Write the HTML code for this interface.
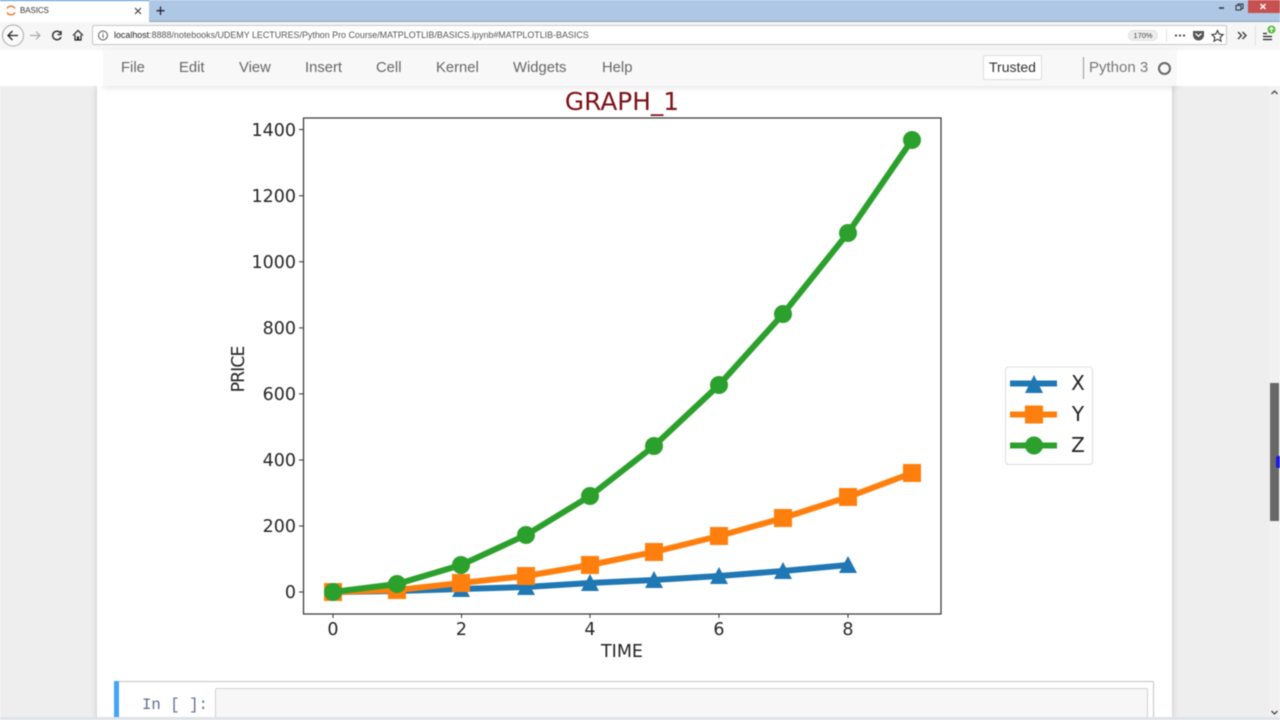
<!DOCTYPE html>
<html><head><meta charset="utf-8"><style>
html,body{margin:0;padding:0;width:1280px;height:720px;overflow:hidden;background:#fff;font-family:"Liberation Sans",sans-serif}
.a{position:absolute}
</style></head><body>
<div class="a" style="left:0;top:0;width:1280px;height:720px;overflow:hidden;filter:blur(.5px)">
<!-- title bar -->
<div class="a" style="left:0;top:0;width:1280px;height:22px;background:#adc7e5"></div>
<div class="a" style="left:149px;top:21px;width:1131px;height:1px;background:#8fa5c0"></div>
<div class="a" style="left:0;top:0;width:149px;height:22px;background:#fff;border-top:1px solid #3f8fdc;box-sizing:border-box"></div>
<div class="a" style="left:1248px;top:0;width:32px;height:13px;background:#c75050"></div>
<svg class="a" style="left:0;top:0" width="1280" height="22" viewBox="0 0 1280 22">
<path d="M7 8.500A4.600 4.600 0 0 1 15 8.500" fill="none" stroke="#e8772e" stroke-width="1.400"/>
<path d="M7 12.500A4.600 4.600 0 0 0 15 12.500" fill="none" stroke="#e8772e" stroke-width="1.400"/>
<path d="M135 8l6 6M141 8l-6 6" stroke="#444" stroke-width="1.200" fill="none"/>
<path d="M160.500 6.500v8.500M156.500 10.700h8" stroke="#223" stroke-width="1.300" fill="none"/>
<path d="M1219 8h5" stroke="#333" stroke-width="1.500"/>
<path d="M1236 5.500h5v4.500h-5zM1238 5.500v-1.500h5v4.500h-2" stroke="#333" stroke-width="1" fill="none"/>
<path d="M1260.500 4l5 5M1265.500 4l-5 5" stroke="#fff" stroke-width="1.500"/>
</svg>
<!-- toolbar -->
<div class="a" style="left:0;top:22px;width:1280px;height:28px;background:#f6f6f6"></div>
<div class="a" style="left:92px;top:25px;width:1135px;height:20px;background:#fff;border:1px solid #c8c8c8;border-radius:2px;box-sizing:border-box"></div>
<svg class="a" style="left:0;top:22px" width="1280" height="28" viewBox="0 22 1280 28">
<circle cx="13" cy="35.500" r="10.500" fill="#fafafa" stroke="#a8a8a8" stroke-width="1"/>
<path d="M18 35.500H8.500M12.500 31l-4.500 4.500 4.500 4.500" stroke="#222" stroke-width="1.300" fill="none"/>
<path d="M30 35.500h10M36 31.500l4 4-4 4" stroke="#aaa" stroke-width="1.200" fill="none"/>
<path d="M60.500 33A4.300 4.300 0 1 0 61 37M61 31v3.500h-3.500" stroke="#222" stroke-width="1.300" fill="none"/>
<path d="M73 35.500l5-5 5 5M75 35v5h2.500v-3h1v3h2.500v-5" stroke="#222" stroke-width="1.200" fill="none"/>
<circle cx="103" cy="35.500" r="4.500" fill="none" stroke="#555" stroke-width="1"/>
<path d="M103 34.500v3.300M103 32.800v.8" stroke="#555" stroke-width="1"/>
<path d="M1166.500 29v13" stroke="#e2e2e2"/>
<circle cx="1176" cy="35.500" r="1.100" fill="#444"/><circle cx="1180" cy="35.500" r="1.100" fill="#444"/><circle cx="1184" cy="35.500" r="1.100" fill="#444"/>
<path d="M1193 31h11v4a5.500 5.500 0 0 1-11 0z" fill="#555"/><path d="M1195.500 33.500l3 2.700 3-2.700" stroke="#fff" stroke-width="1.300" fill="none"/>
<path d="M1217.500 30.500l1.700 3.600 3.900.5-2.900 2.700.8 3.900-3.500-2-3.500 2 .8-3.900-2.900-2.700 3.900-.5z" fill="none" stroke="#333" stroke-width="1.100"/>
<path d="M1238 32l3.500 3.500-3.500 3.500M1242.500 32l3.500 3.500-3.500 3.500" stroke="#333" stroke-width="1.300" fill="none"/>
<path d="M1255.500 25v21" stroke="#e0e0e0"/>
<path d="M1263 33.500h4M1263 36.500h9M1263 39.500h9" stroke="#222" stroke-width="1.300"/>
<circle cx="1271.500" cy="29.500" r="4" fill="#5cb83c"/><path d="M1271.500 32v-4.500M1269.500 29.500l2-2 2 2" stroke="#fff" stroke-width="1.100" fill="none"/>
</svg>
<div class="a" style="left:20px;top:5px;font-size:8px;letter-spacing:-.1px;color:#333;line-height:12px">BASICS</div>
<div class="a" style="left:114px;top:29px;font-size:8.920px;color:#555;line-height:13px;white-space:nowrap"><span style="color:#222">localhost</span>:8888/notebooks/UDEMY LECTURES/Python Pro Course/MATPLOTLIB/BASICS.ipynb#MATPLOTLIB-BASICS</div>
<div class="a" style="left:1128px;top:30px;width:30px;height:11px;background:#eee;border:1px solid #e2e2e2;border-radius:6px;box-sizing:border-box;font-size:7.500px;line-height:10px;text-align:center;color:#444">170%</div>

<!-- page background -->
<div class="a" style="left:0;top:86px;width:1280px;height:634px;background:#eeeeee"></div>
<div class="a" style="left:0;top:50px;width:1280px;height:36px;background:#fff"></div>
<div class="a" style="left:97px;top:86px;width:1075px;height:634px;background:#fff;box-shadow:0 0 6px rgba(0,0,0,.18)"></div>
<div class="a" style="left:103px;top:50px;width:1074px;height:36px;background:#f8f8f8;box-shadow:0 2px 6px rgba(0,0,0,.1)"></div>
<div class="a" style="left:0;top:50px;width:103px;height:36px;background:#fff"></div>
<div class="a" style="left:1177px;top:50px;width:103px;height:36px;background:#fff"></div>
<div style="position:absolute;top:58.500px;font-size:14.800px;line-height:18px;color:#666;white-space:nowrap;left:0">
<span class="a" style="left:121px">File</span><span class="a" style="left:179px">Edit</span><span class="a" style="left:239px">View</span><span class="a" style="left:305px">Insert</span><span class="a" style="left:376px">Cell</span><span class="a" style="left:436px">Kernel</span><span class="a" style="left:513px">Widgets</span><span class="a" style="left:602px">Help</span></div>
<div class="a" style="left:983px;top:55px;width:59px;height:25px;background:#fff;border:1px solid #ddd;border-radius:2px;box-sizing:border-box;font-size:14px;line-height:23px;text-align:center;color:#333">Trusted</div>
<div class="a" style="left:1083px;top:57px;width:1px;height:22px;background:#999"></div>
<div class="a" style="left:1089px;top:59px;font-size:15px;line-height:18px;color:#777">Python 3</div>
<div class="a" style="left:1158px;top:62px;width:13px;height:13px;border:2px solid #666;border-radius:50%;box-sizing:border-box"></div>

<!-- scrollbar -->
<div class="a" style="left:1269px;top:86px;width:11px;height:634px;background:#f1f1f1"></div>
<div class="a" style="left:1269.500px;top:383px;width:9.500px;height:138px;background:#686868"></div>
<svg class="a" style="left:1269px;top:86px" width="11" height="634" viewBox="0 86 11 634">
<path d="M2.500 94l3-3 3 3" fill="none" stroke="#444" stroke-width="1.300"/>
<path d="M2.500 711l3 3 3-3" fill="none" stroke="#444" stroke-width="1.300"/>
<rect x="7" y="456" width="6" height="12" rx="2" fill="#1a1ae0"/>
</svg>

<!-- plot -->
<svg class="a" style="left:0;top:0" width="1280" height="720" viewBox="0 0 1280 720" font-family="'DejaVu Sans',sans-serif">
<text x="622" y="110" font-size="24.800" fill="#7f0f14" text-anchor="middle">GRAPH_1</text>
<rect x="303.500" y="118" width="637.500" height="496" fill="#fff" stroke="#333" stroke-width="1.200"/>
<g stroke="#333" stroke-width="1">
<path d="M299 129.500h4M299 195.700h4M299 261.800h4M299 327.900h4M299 393.900h4M299 460h4M299 526h4M299 592h4"/>
<path d="M333 614v4M461.500 614v4M590 614v4M719 614v4M848 614v4"/>
</g>
<g font-size="17.500" fill="#262626" text-anchor="end">
<text x="296" y="136">1400</text><text x="296" y="202">1200</text><text x="296" y="268">1000</text><text x="296" y="334">800</text><text x="296" y="400">600</text><text x="296" y="466">400</text><text x="296" y="532">200</text><text x="296" y="598">0</text>
</g>
<g font-size="17.500" fill="#262626" text-anchor="middle">
<text x="333" y="635">0</text><text x="461.500" y="635">2</text><text x="590" y="635">4</text><text x="719" y="635">6</text><text x="848" y="635">8</text>
<text x="622" y="657">TIME</text>
<text transform="translate(244 369) rotate(-90)" textLength="47">PRICE</text>
</g>
<g id="x" fill="#1f77b4">
<polyline points="333,592 397,591 461,589 526,587 590,583 654,580 719,576 783,571 848,565" fill="none" stroke="#1f77b4" stroke-width="6"/>
<path d="M333 583l9 17h-18zM397 582l9 17h-18zM461 580l9 17h-18zM526 578l9 17h-18zM590 574l9 17h-18zM654 571l9 17h-18zM719 567l9 17h-18zM783 562l9 17h-18zM848 556l9 17h-18z"/>
</g>
<g id="y" fill="#ff7f0e">
<polyline points="333,592 397,590 461,583 526,576 590,565 654,552 719,536 783,518 848,497 912,473" fill="none" stroke="#ff7f0e" stroke-width="6"/>
<rect x="324" y="583" width="18" height="18"/><rect x="388" y="581" width="18" height="18"/><rect x="452" y="574" width="18" height="18"/><rect x="517" y="567" width="18" height="18"/><rect x="581" y="556" width="18" height="18"/><rect x="645" y="543" width="18" height="18"/><rect x="710" y="527" width="18" height="18"/><rect x="774" y="509" width="18" height="18"/><rect x="839" y="488" width="18" height="18"/><rect x="903" y="464" width="18" height="18"/>
</g>
<g id="z" fill="#2ca02c">
<polyline points="333,592 397,584 461,565 526,535 590,496 654,446 719,385 783,314 848,233 912,140" fill="none" stroke="#2ca02c" stroke-width="6"/>
<circle cx="333" cy="592" r="9"/><circle cx="397" cy="584" r="9"/><circle cx="461" cy="565" r="9"/><circle cx="526" cy="535" r="9"/><circle cx="590" cy="496" r="9"/><circle cx="654" cy="446" r="9"/><circle cx="719" cy="385" r="9"/><circle cx="783" cy="314" r="9"/><circle cx="848" cy="233" r="9"/><circle cx="912" cy="140" r="9"/>
</g>
<!-- legend -->
<rect x="1005.500" y="367" width="87" height="97.500" rx="3" fill="#fff" stroke="#ddd" stroke-width="1"/>
<path d="M1010 383.500h47" stroke="#1f77b4" stroke-width="6"/><path d="M1034 375l9 18h-18z" fill="#1f77b4"/>
<path d="M1010 414.500h47" stroke="#ff7f0e" stroke-width="6"/><rect x="1025" y="405.500" width="18" height="18" fill="#ff7f0e"/>
<path d="M1010 445.500h47" stroke="#2ca02c" stroke-width="6"/><circle cx="1034" cy="445.500" r="9" fill="#2ca02c"/>
<g font-size="20" fill="#222" text-anchor="middle"><text x="1078" y="390">X</text><text x="1078" y="421">Y</text><text x="1078" y="452">Z</text></g>
</svg>

<!-- next cell -->
<div class="a" style="left:114px;top:681px;width:1040px;height:39px;border:1px solid #c4c4c4;border-radius:2px;box-sizing:border-box"></div>
<div class="a" style="left:114px;top:681px;width:5px;height:39px;background:#42a5f5"></div>
<div class="a" style="left:215px;top:688px;width:933px;height:32px;background:#f7f7f7;border:1px solid #d0d0d0;border-radius:2px;box-sizing:border-box"></div>
<div class="a" style="left:142px;top:696px;font-family:'Liberation Mono',monospace;font-size:15.700px;line-height:18px;color:#3a4a7a;opacity:.8;white-space:pre">In [ ]:</div>
<div class="a" style="left:0;top:717px;width:1280px;height:3px;background:#dfe3e6"></div>
</div>
</body></html>
